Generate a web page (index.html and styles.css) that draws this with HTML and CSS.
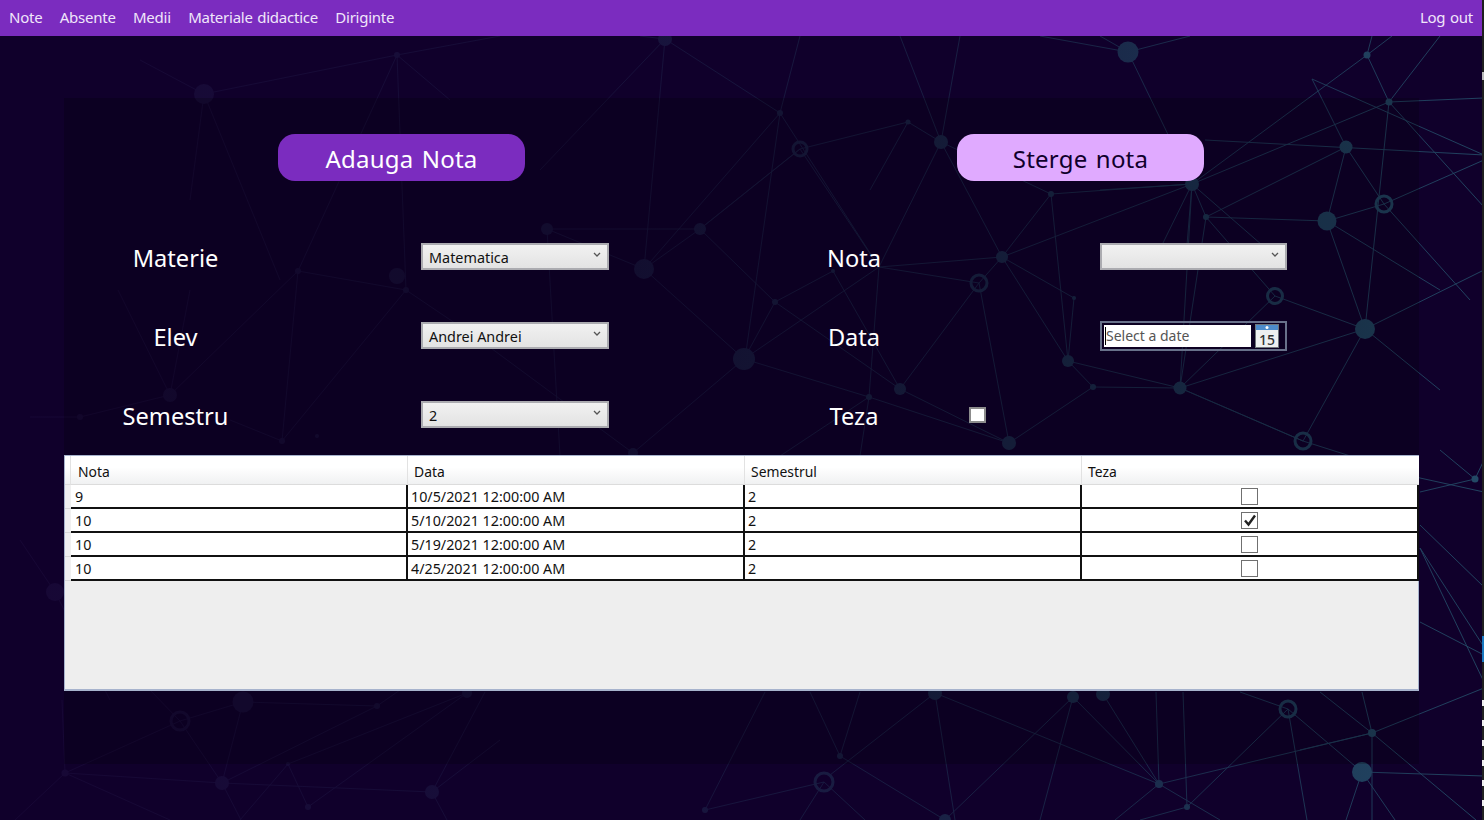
FILE: index.html
```html
<!DOCTYPE html>
<html>
<head>
    <title>Note</title>
    <link rel="stylesheet" href="styles.css">
</head>
<body>
    <div class="shell">
        <div class="app">
            <!-- Background network picture -->
            <svg class="network" width="1482" height="820" viewBox="0 0 1482 820">
                <defs>
                    <linearGradient id="fade" gradientUnits="userSpaceOnUse" x1="0" y1="0" x2="1484" y2="0">
                        <stop offset="0" stop-color="#170735"/>
                        <stop offset="0.4" stop-color="#17103a"/>
                        <stop offset="0.75" stop-color="#1a2a4a"/>
                        <stop offset="1" stop-color="#234a66"/>
                    </linearGradient>
                </defs>
                <path class="edge-line" d="M665 39L780 113M665 39L644 269M665 39L540 170M665 39L640 36M780 113L644 269M780 113L879 267M780 113L745 359M780 113L800 36M800 149L908 122M800 149L700 229M800 149L879 267M908 122L941 142M908 122L870 190M941 142L900 36M941 142L960 36M941 142L879 267M941 142L1002 257M1051 194L941 142M1051 194L1192 184M1051 194L1068 361M1051 194L1002 257M1192 184L1002 257M1002 257L979 283M1002 257L1074 298M1002 257L879 267M979 283L879 267M979 283L1009 443M979 283L900 389M1002 257L1068 361M1074 298L1068 361M644 269L700 229M644 269L744 359M644 269L547 229M700 229L547 229M700 229L775 302M700 229L800 149M775 302L833 271M775 302L744 359M775 302L900 389M744 359L879 267M744 359L869 397M744 359L633 453M869 397L1009 443M869 397L879 267M869 397L860 456M869 397L780 456M900 389L1009 443M900 389L833 271M1009 443L1093 387M1093 387L1068 361M1068 361L1180 388M1093 387L1180 388M1180 388L1192 184M1180 388L1206 217M1180 388L1303 441M1180 388L1365 329M1180 388L1275 296M1128 52L1040 36M1128 52L1190 36M1128 52L1192 184M1128 52L1100 36M1367 55L1192 184M1367 55L1389 102M1367 55L1372 36M1367 55L1392 36M1389 102L1484 98M1389 102L1192 184M1389 102L1440 36M1389 102L1484 207M1389 102L1365 329M1312 79L1484 155M1312 79L1346 147M1346 147L1206 217M1346 147L1327 221M1346 147L1384 204M1192 184L1206 217M1192 184L1187 245M1192 184L1262 245M1192 184L1162 245M1100 190L1192 184M1205 140L1484 155M1206 217L1327 221M1327 221L1384 204M1327 221L1365 329M1327 221L1440 290M1384 204L1484 160M1384 204L1470 300M1275 296L1365 329M1275 296L1206 217M1365 329L1484 270M1365 329L1440 390M1365 329L1303 441M1303 441L1180 388M1303 441L1420 478M1420 478L1484 492M1420 492L1475 479M1475 479L1440 450M1475 479L1484 460M1420 525L1484 587M1420 548L1484 647M1420 548L1483 680M1420 622L1484 655M1372 733L1484 688M1372 733L1300 750M1372 733L1320 692M1372 733L1476 820M1372 733L1372 820M1372 733L1362 692M1362 772L1484 776M1362 772L1346 820M1362 772L1395 820M935 693L1159 784M1103 694L1159 784M1073 697L1159 784M1159 784L1372 733M935 693L830 775M824 782L705 810M824 782L865 820M824 782L800 820M1159 784L1220 820M1159 784L1115 820M1187 807L1140 820M1187 807L1288 709M1288 709L1307 820M1288 709L1362 772M1288 709L1240 692M840 756L945 820M840 756L810 692M840 756L860 692M945 820L1073 697M935 693L955 820M1073 697L1040 820M705 810L765 692M1156 692L1159 784M1183 692L1187 807M243 702L377 706M243 702L180 721M243 702L222 783M180 721L65 773M180 721L222 783M180 721L150 690M65 773L222 783M65 773L170 820M65 773L15 820M65 773L62 700M222 783L432 792M222 783L377 706M222 783L241 820M432 792L500 740M432 792L485 692M432 792L447 820M377 706L400 690M288 764L467 693M288 764L308 807M288 764L240 820M308 807L467 693M204 94L397 55M204 94L140 60M204 94L190 200M204 94L280 280M397 55L500 36M397 55L298 271M397 55L450 100M397 55L406 290M298 271L406 290M298 271L170 395M298 271L282 441M406 290L282 441M170 395L80 417M170 395L118 290M170 395L190 290M80 417L30 417M282 441L230 420M55 592L20 540M55 592L110 700M560 456L547 229M406 290L480 340M480 340L633 453"/>
                <g class="nodes">
                    <circle cx="204" cy="94" r="10"/><circle cx="397" cy="55" r="3"/><circle cx="298" cy="271" r="3"/><circle cx="406" cy="290" r="3"/>
                    <circle cx="397" cy="276" r="8"/><circle cx="170" cy="395" r="7"/><circle cx="80" cy="417" r="3"/><circle cx="282" cy="441" r="3"/>
                    <circle cx="317" cy="436" r="2"/><circle cx="55" cy="592" r="9"/><circle cx="665" cy="39" r="7"/><circle cx="780" cy="113" r="3"/>
                    <circle cx="908" cy="122" r="2.5"/><circle cx="941" cy="142" r="7"/><circle cx="1051" cy="194" r="3"/><circle cx="700" cy="229" r="6"/>
                    <circle cx="547" cy="229" r="6"/><circle cx="644" cy="269" r="10"/><circle cx="1002" cy="257" r="6"/><circle cx="775" cy="302" r="3"/>
                    <circle cx="833" cy="271" r="2"/><circle cx="744" cy="359" r="11"/><circle cx="1068" cy="361" r="6"/><circle cx="1093" cy="387" r="3"/>
                    <circle cx="1074" cy="298" r="2"/><circle cx="869" cy="397" r="3"/><circle cx="900" cy="389" r="6"/><circle cx="1009" cy="443" r="7"/>
                    <circle cx="633" cy="453" r="5"/><circle cx="1128" cy="52" r="10.5"/><circle cx="1367" cy="55" r="3.5"/><circle cx="1389" cy="102" r="3.5"/>
                    <circle cx="1346" cy="147" r="6.5"/><circle cx="1327" cy="221" r="9.5"/><circle cx="1206" cy="217" r="3"/><circle cx="1192" cy="184" r="7"/>
                    <circle cx="1365" cy="329" r="10"/><circle cx="1180" cy="388" r="6.5"/><circle cx="1475" cy="479" r="3.5"/><circle cx="1372" cy="733" r="4"/>
                    <circle cx="1362" cy="772" r="10"/><circle cx="935" cy="693" r="7"/><circle cx="1073" cy="697" r="6"/><circle cx="1103" cy="694" r="7"/>
                    <circle cx="1159" cy="784" r="4"/><circle cx="1187" cy="807" r="3"/><circle cx="705" cy="810" r="3"/><circle cx="840" cy="756" r="3"/>
                    <circle cx="945" cy="820" r="6"/><circle cx="243" cy="702" r="10.5"/><circle cx="377" cy="706" r="3"/><circle cx="65" cy="773" r="3.5"/>
                    <circle cx="222" cy="783" r="7"/><circle cx="432" cy="792" r="7"/><circle cx="308" cy="807" r="3"/><circle cx="288" cy="764" r="2"/>
                    <circle cx="467" cy="693" r="5"/>
                </g>
                <g class="rings">
                    <circle cx="800" cy="149" r="7"/><circle cx="979" cy="283" r="8"/><circle cx="1384" cy="204" r="8"/><circle cx="1275" cy="296" r="7.5"/>
                    <circle cx="1303" cy="441" r="8"/><circle cx="1288" cy="709" r="8"/><circle cx="824" cy="782" r="9"/><circle cx="180" cy="721" r="9"/>
                </g>
            </svg>

            <div class="topbar">
                <a class="nav-item">Note</a>
                <a class="nav-item">Absente</a>
                <a class="nav-item">Medii</a>
                <a class="nav-item">Materiale didactice</a>
                <a class="nav-item">Diriginte</a>
                <a class="nav-item logout">Log out</a>
            </div>

            <div class="panel">
                <div class="actions">
                    <div class="action-cell"><button class="action primary">Adauga Nota</button></div>
                    <div class="action-cell"><button class="action secondary">Sterge nota</button></div>
                </div>

                <div class="form">
                    <div class="field-label">Materie</div>
                    <div class="field"><div class="combo"><span>Matematica</span><svg class="chevron" width="8" height="6" viewBox="0 0 8 6"><path d="M1 1L4 4L7 1"/></svg></div></div>
                    <div class="field-label">Nota</div>
                    <div class="field"><div class="combo narrow"><span></span><svg class="chevron" width="8" height="6" viewBox="0 0 8 6"><path d="M1 1L4 4L7 1"/></svg></div></div>

                    <div class="field-label">Elev</div>
                    <div class="field"><div class="combo"><span>Andrei Andrei</span><svg class="chevron" width="8" height="6" viewBox="0 0 8 6"><path d="M1 1L4 4L7 1"/></svg></div></div>
                    <div class="field-label">Data</div>
                    <div class="field">
                        <div class="date-picker">
                            <div class="date-input"><span class="caret"></span>Select a date</div>
                            <svg class="calendar" width="24" height="24" viewBox="0 0 24 24">
                                <rect x="0.5" y="0.5" width="23" height="23" fill="#eef0f1" stroke="#6f767a"/>
                                <rect x="1" y="1" width="22" height="5" fill="#4d8ccb"/>
                                <circle cx="12" cy="3.5" r="1.5" fill="#fff"/>
                                <text x="12" y="21" class="calendar-day">15</text>
                            </svg>
                        </div>
                    </div>

                    <div class="field-label">Semestru</div>
                    <div class="field"><div class="combo"><span>2</span><svg class="chevron" width="8" height="6" viewBox="0 0 8 6"><path d="M1 1L4 4L7 1"/></svg></div></div>
                    <div class="field-label">Teza</div>
                    <div class="field"><span class="teza-box"></span></div>
                </div>

                <div class="grid-box">
                    <table class="grades">
                        <thead>
                            <tr>
                                <th class="row-head"></th>
                                <th>Nota</th>
                                <th>Data</th>
                                <th>Semestrul</th>
                                <th>Teza</th>
                            </tr>
                        </thead>
                        <tbody>
                            <tr>
                                <td class="row-head"></td>
                                <td>9</td>
                                <td>10/5/2021 12:00:00 AM</td>
                                <td>2</td>
                                <td class="check-cell"><span class="check"></span></td>
                            </tr>
                            <tr>
                                <td class="row-head"></td>
                                <td>10</td>
                                <td>5/10/2021 12:00:00 AM</td>
                                <td>2</td>
                                <td class="check-cell"><span class="check"><svg width="14" height="14" viewBox="0 0 14 14"><path d="M2 7.5L5.5 11.5L12 2.5"/></svg></span></td>
                            </tr>
                            <tr>
                                <td class="row-head"></td>
                                <td>10</td>
                                <td>5/19/2021 12:00:00 AM</td>
                                <td>2</td>
                                <td class="check-cell"><span class="check"></span></td>
                            </tr>
                            <tr>
                                <td class="row-head"></td>
                                <td>10</td>
                                <td>4/25/2021 12:00:00 AM</td>
                                <td>2</td>
                                <td class="check-cell"><span class="check"></span></td>
                            </tr>
                        </tbody>
                    </table>
                </div>
            </div>
        </div>
        <div class="window-edge"></div>
    </div>
</body>
</html>
```

FILE: styles.css
```css
/* Page frame */
html, body {
    margin: 0;
    height: 820px;
    overflow: hidden;
    font-family: "Noto Sans", "Open Sans", sans-serif;
}

.shell {
    display: flex;
    height: 820px;
    background-color: #10002b;
}

.app {
    position: relative;
    flex: 1;
    overflow: hidden;
}

/* Strip of the window behind, at the right edge */
.window-edge {
    width: 2px;
    background:
        linear-gradient(#1f1f1f 0, #1f1f1f 72px, #bbb 72px, #bbb 80px, #1f1f1f 80px, #1f1f1f 636px, #1878c0 636px, #1878c0 662px, #1f1f1f 662px, #1f1f1f 700px, transparent 700px),
        repeating-linear-gradient(#eee 0, #eee 6px, #222 6px, #222 20px);
}

/* Background network */
.network {
    position: absolute;
    top: 0;
    left: 0;
}

.edge-line {
    fill: none;
    stroke: url(#fade);
    stroke-width: 0.9;
}

.nodes circle {
    fill: url(#fade);
}

.rings circle {
    fill: none;
    stroke: url(#fade);
    stroke-width: 3;
}

/* Top menu */
.topbar {
    position: relative;
    display: flex;
    align-items: center;
    gap: 17.4px;
    height: 36px;
    padding: 0 9px 2px;
    box-sizing: border-box;
    background-color: #7b2cbf;
}

.nav-item {
    color: #f0e6fa;
    font-size: 15px;
    letter-spacing: -0.25px;
    word-spacing: 1px;
    white-space: nowrap;
}

.logout {
    margin-left: auto;
}

/* Main panel */
.panel {
    position: relative;
    box-sizing: border-box;
    width: 1355px;
    height: 666px;
    margin: 62px 0 0 64px;
    padding-top: 36px;
    background-color: rgba(0, 0, 0, 0.2);
}

.actions {
    display: grid;
    grid-template-columns: 678px 1fr;
    height: 47px;
}

.action-cell {
    padding-left: 214px;
}

.action-cell + .action-cell {
    padding-left: 215px;
}

.action {
    width: 247px;
    height: 47px;
    border: none;
    border-radius: 17px;
    padding: 2px 0 0;
    font-family: inherit;
    font-size: 24px;
    letter-spacing: 0.2px;
    word-spacing: 2px;
}

.primary {
    background-color: #7b2cbf;
    color: #fff;
}

.secondary {
    background-color: #e0aaff;
    color: #10002b;
}

/* Form */
.form {
    display: grid;
    grid-template-columns: 223px 455px 224px 1fr;
    grid-auto-rows: 79px;
    margin-top: 36px;
}

.field-label {
    align-self: center;
    padding-top: 3px;
    color: #fff;
    font-size: 23.6px;
    line-height: 32px;
    text-align: center;
}

.field {
    display: flex;
    align-items: center;
    padding-left: 134px;
}

.combo {
    display: flex;
    align-items: center;
    justify-content: space-between;
    box-sizing: border-box;
    width: 188px;
    height: 27px;
    padding: 1px 6px 0 6px;
    border: 2px solid #ababb0;
    background: linear-gradient(#f1f1f1, #e3e3e3);
    color: #111;
    font-size: 14.4px;
}

.narrow {
    width: 187px;
}

.chevron {
    fill: none;
    stroke: #555;
    stroke-width: 1.3;
    margin-bottom: 5px;
}

.date-picker {
    display: flex;
    align-items: center;
    gap: 4px;
    box-sizing: border-box;
    width: 187px;
    height: 30px;
    padding: 0 2px;
    border: 2px solid #68718a;
}

.date-input {
    display: flex;
    align-items: center;
    box-sizing: border-box;
    width: 147px;
    height: 22px;
    padding-left: 1px;
    background-color: #fff;
    color: #555;
    font-size: 14px;
}

.caret {
    width: 1px;
    height: 18px;
    background-color: #000;
}

.calendar {
    flex: none;
}

.calendar-day {
    font-family: "Noto Sans", sans-serif;
    font-size: 14px;
    font-weight: 500;
    text-anchor: middle;
    fill: #333;
}

.teza-box {
    box-sizing: border-box;
    width: 17px;
    height: 16px;
    margin-left: -131px;
    border: 2px solid #8c8c8c;
    background-color: #fff;
}

/* Data grid */
.grid-box {
    box-sizing: border-box;
    height: 236px;
    margin-top: 1px;
    border: 1px solid #a7b3cd;
    border-bottom-width: 2px;
    background-color: #eeeeee;
}

.grades {
    table-layout: fixed;
    width: 1352px;
    border-collapse: separate;
    border-spacing: 0;
    color: #111;
    font-size: 14.3px;
}

.grades th {
    box-sizing: border-box;
    width: 337px;
    height: 29px;
    padding: 2px 0 0 6px;
    border-right: 1px solid #e2e2e2;
    border-bottom: 1px solid #dcdcdc;
    background: linear-gradient(#fff 40%, #f0f1f2);
    font-weight: 400;
    font-size: 13.9px;
    text-align: left;
}

.grades th:last-child {
    border-right: none;
}

.grades th.row-head {
    width: 6px;
    padding: 0;
}

.grades .row-head + th {
    padding-left: 7px;
}

.grades td {
    box-sizing: border-box;
    height: 24px;
    padding: 2px 0 0 3px;
    border-right: 2px solid #111;
    border-bottom: 2px solid #111;
    background-color: #fff;
    line-height: 1;
}

.grades .row-head + td {
    padding-left: 4px;
}

.grades td.row-head {
    padding: 0;
    border-right: none;
    border-bottom: 1px solid #d8d8d8;
    background-color: #f0f0f0;
}

.check-cell {
    text-align: center;
}

.grades td.check-cell {
    padding: 0;
}

.check {
    display: inline-flex;
    align-items: center;
    justify-content: center;
    box-sizing: border-box;
    width: 17px;
    height: 17px;
    border: 1px solid #707070;
    background-color: #fff;
    vertical-align: middle;
}

.check path {
    fill: none;
    stroke: #222;
    stroke-width: 2.4;
}
```
